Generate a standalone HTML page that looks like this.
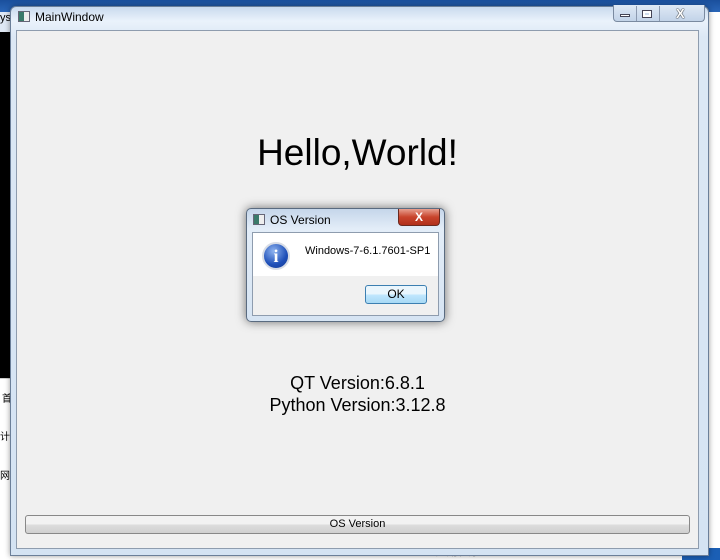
<!DOCTYPE html>
<html><head><meta charset="utf-8"><style>
*{margin:0;padding:0;box-sizing:border-box}
body{width:720px;height:560px;overflow:hidden;position:relative;background:#fff;font-family:"Liberation Sans","Noto Sans CJK SC",sans-serif}
.a{position:absolute}
</style></head><body>
<div class="a" style="left:0;top:0;width:720px;height:12px;background:linear-gradient(#1a4f9c,#2a66b8)"></div>
<div class="a" style="left:700px;top:12px;width:20px;height:548px;background:#fff"></div>
<div class="a" style="left:0;top:12px;width:14px;height:20px;background:#dfe8f4;font-size:11px;color:#000">ys</div>
<div class="a" style="left:0;top:32px;width:14px;height:346px;background:#000"></div>
<div class="a" style="left:0;top:378px;width:14px;height:182px;background:#fff;border-top:1px solid #ccc"></div>
<div class="a" style="left:2px;top:390px;font-size:10px">首</div>
<div class="a" style="left:0;top:428px;font-size:10px">计</div>
<div class="a" style="left:0;top:467px;font-size:10px">网</div>
<div class="a" style="left:0;top:548px;width:720px;height:12px;background:#fff"></div>
<div class="a" style="left:112px;top:543px;font-size:11px;color:#333">Youcam_m4</div>
<div class="a" style="left:335px;top:543px;font-size:11px;color:#777">2024/12/26 16:24 &nbsp;&nbsp;&nbsp;&nbsp;应用程序</div>
<div class="a" style="left:538px;top:543px;font-size:11px;color:#777">150,737 KB</div>
<div class="a" style="left:682px;top:548px;width:38px;height:12px;background:#1b5fb5"></div>
<!-- main window frame -->
<div class="a" style="left:10px;top:6px;width:699px;height:550px;border:1px solid #6b7f99;border-radius:6px 6px 0 0;background:linear-gradient(#c9daee 0,#eaf2fb 14px,#dce8f5 30px,#d4e3f3 100%);box-shadow:0 0 6px rgba(0,0,0,.4)"></div>
<div class="a" style="left:18px;top:11px;width:12px;height:11px;border:1px solid #667;background:linear-gradient(90deg,#3a7a6a 50%,#eee 50%)"></div>
<div class="a" style="left:35px;top:10px;font-size:12px;color:#000">MainWindow</div>
<div class="a" style="left:613px;top:5px;width:92px;height:17px;border:1px solid #7a8aa0;border-top:none;border-radius:0 0 4px 4px;background:linear-gradient(#dfe9f5,#c2d3e8)"></div>
<div class="a" style="left:636px;top:6px;width:1px;height:15px;background:#8c9ab0"></div>
<div class="a" style="left:659px;top:6px;width:1px;height:15px;background:#8c9ab0"></div>
<div class="a" style="left:620px;top:14px;width:10px;height:3px;background:#fff;border:1px solid #445"></div>
<div class="a" style="left:642px;top:10px;width:10px;height:8px;border:1px solid #445;box-shadow:inset 0 0 0 2px #fff"></div>
<div class="a" style="left:676px;top:6px;font-size:13px;font-weight:bold;color:#fff;text-shadow:0 0 1px #000,0 0 1px #000">X</div>
<div class="a" style="left:16px;top:30px;width:683px;height:519px;background:#f0f0f0;border:1px solid #8e9cae"></div>
<div class="a" style="left:16px;top:132px;width:683px;text-align:center;font-size:37px;color:#000">Hello,World!</div>
<div class="a" style="left:16px;top:372px;width:683px;text-align:center;font-size:18px;line-height:22px;color:#000">QT Version:6.8.1<br>Python Version:3.12.8</div>
<div class="a" style="left:25px;top:515px;width:665px;height:19px;border:1px solid #888;border-radius:3px;background:linear-gradient(#f2f2f2 45%,#dcdcdc 55%,#d0d0d0);font-size:11px;text-align:center;line-height:17px">OS Version</div>
<!-- dialog -->
<div class="a" style="left:246px;top:208px;width:199px;height:114px;border:1px solid #5a6b80;border-radius:5px;background:linear-gradient(#c5d6ea,#e3edf8 20px,#d6e4f3);box-shadow:0 0 10px rgba(0,0,0,.55)"></div>
<div class="a" style="left:253px;top:214px;width:12px;height:11px;border:1px solid #667;background:linear-gradient(90deg,#3a7a6a 50%,#eee 50%)"></div>
<div class="a" style="left:270px;top:213px;font-size:12px;color:#000">OS Version</div>
<div class="a" style="left:398px;top:209px;width:42px;height:17px;border:1px solid #6a2a20;border-top:none;border-radius:0 0 4px 4px;background:linear-gradient(#e8a090,#c8442c 50%,#b0301c);color:#fff;font-weight:bold;font-size:12px;text-align:center;line-height:16px">X</div>
<div class="a" style="left:252px;top:232px;width:187px;height:84px;border:1px solid #8e9cae;background:#f0f0f0"></div>
<div class="a" style="left:253px;top:233px;width:185px;height:43px;background:#fff"></div>
<div class="a" style="left:262px;top:242px;width:28px;height:28px;border-radius:50%;background:radial-gradient(circle at 40% 30%,#8fb4f0,#1e4fb8 60%,#163a90);border:2px solid #d8dde6;color:#fff;font-family:'Liberation Serif',serif;font-weight:bold;font-size:18px;text-align:center;line-height:24px">i</div>
<div class="a" style="left:305px;top:245px;font-size:11px;color:#000">Windows-7-6.1.7601-SP1</div>
<div class="a" style="left:365px;top:285px;width:62px;height:19px;border:1px solid #3c7fb1;border-radius:3px;background:linear-gradient(#eaf6fd 45%,#bee6fd 55%,#a7d9f5);font-size:12px;text-align:center;line-height:17px">OK</div>
</body></html>
